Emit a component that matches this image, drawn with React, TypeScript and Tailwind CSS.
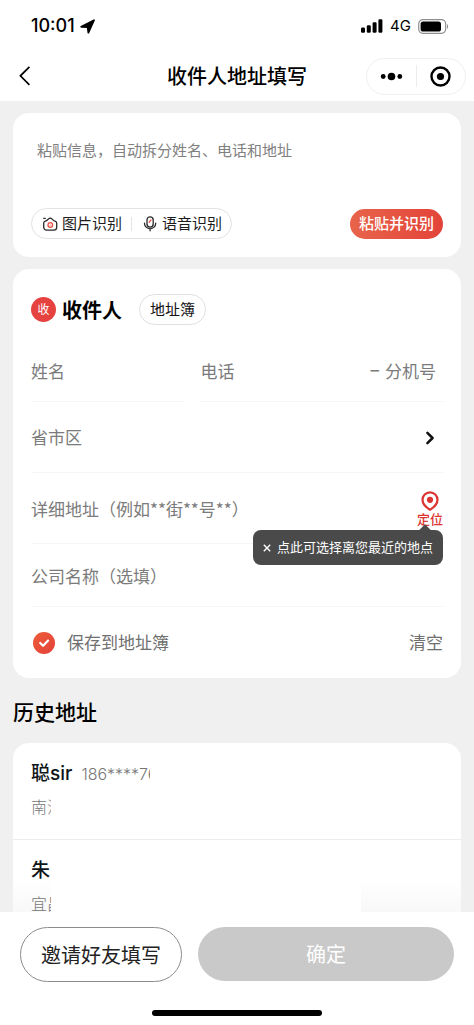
import type { ReactNode } from "react";

function StatusBar() {
  return (
    <div className="flex h-[51px] shrink-0 items-center justify-between pl-[31px] pr-[25px] pt-px">
      <div className="flex items-center gap-[5px]">
        <span className="text-[18px] font-medium leading-6">10:01</span>
        <svg className="size-[15px]" viewBox="0 0 15 15" aria-hidden="true">
          <path d="M14 1.2 8.4 13.600 7.600 8.200 1.200 7.800Z" fill="#000" stroke="#000" strokeWidth="1.800" strokeLinejoin="round" />
        </svg>
      </div>
      <div className="flex items-center gap-[7px]">
        <svg className="h-[14px] w-[22px]" viewBox="0 0 22 14" aria-hidden="true">
          <rect x="0" y="8.6" width="4" height="5.2" rx="1.2" />
          <rect x="5.8" y="6.2" width="4" height="7.6" rx="1.2" />
          <rect x="11.6" y="3.2" width="4" height="10.6" rx="1.2" />
          <rect x="17.4" y="0.2" width="4" height="13.6" rx="1.2" />
        </svg>
        <span className="text-[15px] leading-5">4G</span>
        <svg className="h-[15px] w-[31px]" viewBox="0 0 31 15" aria-hidden="true">
          <rect x="0.7" y="0.7" width="27" height="13.6" rx="4.2" fill="none" stroke="#8f8f8f" strokeWidth="1.2" />
          <rect x="2.6" y="2.5" width="20.4" height="10" rx="2.6" />
          <path d="M29 5.2c1.5.6 1.5 4 0 4.6Z" fill="#8f8f8f" />
        </svg>
      </div>
    </div>
  );
}

function NavBar() {
  return (
    <header className="grid h-[50px] shrink-0 grid-cols-[1fr_auto_1fr] items-center px-2">
      <button type="button" aria-label="返回" className="ml-[7px] flex size-5 items-center justify-center">
        <svg className="size-5" viewBox="0 0 20 20" fill="none" stroke="#000" strokeWidth="1.7" aria-hidden="true">
          <path d="M14.4 0.8 5.4 9.8l9 9" />
        </svg>
      </button>
      <h1 className="pt-[2px] text-[20px] font-medium leading-7">收件人地址填写</h1>
      <div className="flex h-[37px] w-[100px] items-center justify-self-end rounded-full border border-[#efefef]">
        <button type="button" aria-label="更多" className="flex flex-1 items-center justify-center">
          <svg className="h-[9px] w-6" viewBox="0 0 24 9" aria-hidden="true">
            <circle cx="4.2" cy="4.5" r="2.4" />
            <circle cx="12.500" cy="4.500" r="3.800" />
            <circle cx="20.800" cy="4.500" r="2.400" />
          </svg>
        </button>
        <span className="h-[22px] w-px bg-[#ececec]" />
        <button type="button" aria-label="关闭" className="flex flex-1 items-center justify-center">
          <svg className="size-[21px]" viewBox="0 0 21 21" aria-hidden="true">
            <circle cx="10.5" cy="10.5" r="9" fill="none" stroke="#000" strokeWidth="2.4" />
            <circle cx="10.5" cy="10.5" r="3.6" />
          </svg>
        </button>
      </div>
    </header>
  );
}

function PasteCard() {
  return (
    <section className="flex flex-col rounded-2xl bg-white px-[18px] pb-[18px] pt-[27px]">
      <textarea
        aria-label="粘贴信息"
        placeholder="粘贴信息，自动拆分姓名、电话和地址"
        className="h-[68px] w-full resize-none px-[6px] text-[15px] leading-[22px] outline-none placeholder:text-[#808080]"
      />
      <div className="flex items-center justify-between">
        <div className="flex h-[31px] items-center rounded-full border border-[#e2e2e2] text-[15px] leading-5 text-[#1c1c1c]">
          <button type="button" className="flex items-center gap-1 pl-[10px] pr-[9px] pt-px">
            <svg className="size-4" viewBox="0 0 16 16" fill="none" strokeLinecap="round" strokeLinejoin="round" aria-hidden="true">
              <path
                d="M3.300 5.200C4.700 4.900 5.500 3.900 6.500 2.900a2.600 2.600 0 0 1 3.500 0c1 1 1.800 2 3.100 2.300 1 .3 1.600 1 1.600 2v4.100a2.900 2.900 0 0 1-2.900 2.900H4.600a2.900 2.900 0 0 1-2.900-2.900V7.200c0-1 .6-1.700 1.600-2Z"
                stroke="#2a2a2a"
                strokeWidth="1.300"
              />
              <path d="M1.800 2.400h1.400" stroke="#2a2a2a" strokeWidth="1.300" />
              <circle cx="8.300" cy="9" r="2.300" stroke="#e64a40" strokeWidth="1.300" />
              <circle cx="8.300" cy="9" r="0.600" fill="#e64a40" />
            </svg>
            图片识别
          </button>
          <span className="h-[14px] w-px bg-[#e4e4e4]" />
          <button type="button" className="flex items-center gap-1 pl-[10px] pr-[9px] pt-px">
            <svg className="size-4" viewBox="0 0 16 16" fill="none" strokeLinecap="round" aria-hidden="true">
              <rect x="5" y="0.900" width="6.200" height="10.200" rx="3.100" stroke="#2a2a2a" strokeWidth="1.300" />
              <path d="M2.500 7.200a5.600 5.600 0 0 0 11.200 0M8.100 12.900v1.900" stroke="#2a2a2a" strokeWidth="1.300" />
              <path d="M7.300 6.200 9 3.900" stroke="#e64a40" strokeWidth="1.300" />
            </svg>
            语音识别
          </button>
        </div>
        <button
          type="button"
          className="h-[30px] rounded-full bg-linear-to-r from-[#e8634a] to-[#e34339] px-[9px] pt-px text-[15px] font-medium text-white"
        >
          粘贴并识别
        </button>
      </div>
    </section>
  );
}

function FormRow({ tall = false, children }: { tall?: boolean; children: ReactNode }) {
  return (
    <div
      className={`relative flex min-w-0 items-center border-b border-[#f5f5f5] pt-[2px] ${tall ? "h-[71px]" : "h-[63px]"}`}
    >
      {children}
    </div>
  );
}

const field =
  "min-w-0 bg-transparent font-['Noto_Sans_CJK_SC',sans-serif] text-[17px] leading-6 outline-none placeholder:text-[#7b7b7b]";

function RecipientCard() {
  return (
    <section className="rounded-2xl bg-white px-[18px] pt-[25px]">
      <div className="flex items-center">
        <span className="flex size-[25px] items-center justify-center rounded-full bg-[#e64340] text-[12px] text-white">收</span>
        <h2 className="ml-[6px] pt-[2px] text-[20px] font-bold leading-7">收件人</h2>
        <button
          type="button"
          className="ml-[17px] h-[31px] rounded-full border border-[#e0e0e0] px-[10px] pt-px text-[15px] text-[#111]"
        >
          地址簿
        </button>
      </div>

      <div className="mt-[14px] grid grid-cols-[minmax(0,5fr)_minmax(0,8fr)] gap-[18px]">
        <FormRow>
          <input aria-label="姓名" placeholder="姓名" className={`${field} w-full`} />
        </FormRow>
        <FormRow>
          <input type="tel" aria-label="电话" placeholder="电话" className={`${field} flex-1`} />
          <span className="mr-[6px] text-[17px] text-[#7b7b7b]">–</span>
          <input aria-label="分机号" placeholder="分机号" className={`${field} w-[58px]`} />
        </FormRow>
      </div>

      <FormRow tall>
        <button type="button" className="flex w-full items-center justify-between text-[17px] leading-6 text-[#7b7b7b]">
          省市区
          <svg className="mr-2 h-[14px] w-[10px]" viewBox="0 0 10 14" fill="none" aria-hidden="true">
            <path d="m2.400 1.800 5.200 5.200-5.200 5.200" stroke="#111" strokeWidth="2.500" strokeLinecap="round" strokeLinejoin="round" />
          </svg>
        </button>
      </FormRow>

      <FormRow tall>
        <input aria-label="详细地址" placeholder="详细地址（例如**街**号**）" className={`${field} flex-1`} />
        <button type="button" className="flex flex-col items-center text-[13px] font-medium leading-4 text-[#dc3430]">
          <svg className="size-5" viewBox="0 0 20 20" fill="none" aria-hidden="true">
            <path
              d="M10 18.700C6.600 16.700 2.500 13.300 2.500 8.800a7.500 7.500 0 0 1 15 0c0 4.500-4.100 7.900-7.500 9.900Z"
              stroke="currentColor"
              strokeWidth="2.200"
              strokeLinejoin="round"
            />
            <circle cx="10" cy="8.800" r="3.100" fill="currentColor" />
          </svg>
          定位
        </button>
        <div className="absolute right-0 top-[57px] z-10 flex h-[35px] items-center gap-[6px] rounded-lg bg-[#4a4a4a] px-[10px] text-[13px] text-white">
          <span className="absolute -top-1 right-[14px] size-2 rotate-45 bg-[#4a4a4a]" />
          <button type="button" aria-label="关闭提示" className="flex size-2">
            <svg className="size-2" viewBox="0 0 8 8" stroke="#fff" strokeWidth="1.400" aria-hidden="true">
              <path d="m0.800 0.800 6.400 6.400M7.200 0.800 0.800 7.200" />
            </svg>
          </button>
          <span className="pt-px">点此可选择离您最近的地点</span>
        </div>
      </FormRow>

      <FormRow>
        <input aria-label="公司名称" placeholder="公司名称（选填）" className={`${field} w-full`} />
      </FormRow>

      <div className="flex h-[71px] items-center justify-between pt-px text-[17px] leading-6 text-[#6f6f6f]">
        <label className="flex items-center gap-3">
          <span className="relative ml-[2px] flex size-[22px]">
            <input
              type="checkbox"
              defaultChecked
              className="peer size-[22px] appearance-none rounded-full border border-[#ccc] checked:border-0 checked:bg-linear-to-br checked:from-[#ee5c38] checked:to-[#e3403a]"
            />
            <svg
              className="pointer-events-none absolute inset-0 hidden size-[22px] peer-checked:block"
              viewBox="0 0 22 22"
              fill="none"
              aria-hidden="true"
            >
              <path d="m7.200 11 2.900 2.800 5-5.200" stroke="#fff" strokeWidth="2.200" strokeLinecap="round" strokeLinejoin="round" />
            </svg>
          </span>
          保存到地址簿
        </label>
        <button type="button">清空</button>
      </div>
    </section>
  );
}

function History() {
  return (
    <section>
      <h2 className="text-[21px] font-medium leading-[30px]">历史地址</h2>
      <ul className="mt-[15px] overflow-hidden rounded-t-2xl bg-white">
        <li className="h-[97px] border-b border-[#ececec] px-[18px] pt-[18px]">
          <div className="flex items-center gap-[9px]">
            <span className="text-[19px] font-medium leading-[26px] text-[#0f1518]">聪sir</span>
            <span className="w-[69px] overflow-hidden whitespace-nowrap text-[16px] font-light leading-[26px] text-[#777]">186****76</span>
          </div>
          <p className="mt-2 w-5 overflow-hidden whitespace-nowrap text-[16px] font-light leading-6 text-[#777]">南江</p>
        </li>
        <li className="relative h-[97px] bg-linear-to-b from-white from-40% to-[#f7f7f7] to-80% px-[18px] pt-[18px]">
          <span className="absolute bottom-0 left-[38px] right-[100px] top-0 bg-white" />
          <p className="text-[19px] font-medium leading-[26px] text-[#0f1518]">朱</p>
          <p className="mt-2 w-5 overflow-hidden whitespace-nowrap text-[16px] font-light leading-6 text-[#777]">宜昌</p>
        </li>
      </ul>
    </section>
  );
}

export default function App() {
  return (
    <div className="flex h-dvh flex-col bg-white font-[Inter,'Noto_Sans_CJK_SC',sans-serif] text-black" lang="zh-CN">
      <StatusBar />
      <NavBar />
      <main className="flex min-h-0 flex-1 flex-col gap-3 overflow-y-auto bg-[#f0f0f0] px-[13px] pt-3 [scrollbar-width:none]">
        <PasteCard />
        <RecipientCard />
        <div className="pt-2">
          <History />
        </div>
      </main>
      <footer className="shrink-0 bg-white px-5 pt-[15px]">
        <div className="flex gap-4">
          <button type="button" className="h-[55px] w-[162px] rounded-full border border-[#8c8c8c] pt-[2px] text-[20px] text-[#222]">
            邀请好友填写
          </button>
          <button type="button" className="h-[54px] flex-1 rounded-full bg-[#c9c9c9] pt-[2px] text-[20px] text-white">
            确定
          </button>
        </div>
        <div className="mx-auto mb-[9px] mt-7 h-[6px] w-[170px] rounded-full bg-black" />
      </footer>
    </div>
  );
}
